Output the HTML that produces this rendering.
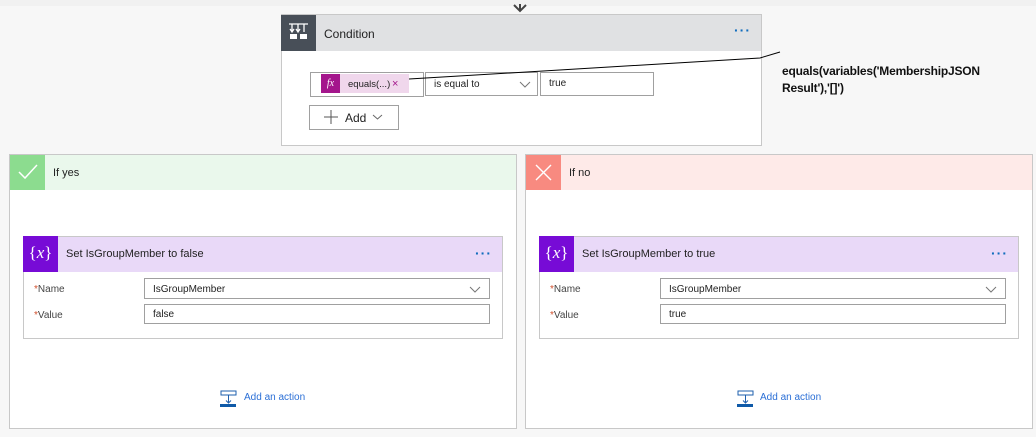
<!DOCTYPE html>
<html><head><style>
*{box-sizing:border-box;margin:0;padding:0}
body{width:1036px;height:437px;background:#f7f7f7;font-family:"Liberation Sans",sans-serif;position:relative;overflow:hidden;color:#222}
.a{position:absolute}
.t{font-size:11px;position:absolute;white-space:nowrap}
.dots{position:absolute;color:#0f6cbd;font-size:14px;letter-spacing:1px;font-weight:bold}
.inp{position:absolute;border:1px solid #a0a0a0;background:#fff;font-size:10px;padding:5px 0 0 8px}
.star{color:#d1512e}
</style></head><body>
<div class="a" style="left:0;top:0;width:1036px;height:6px;background:#f1f1f1"></div>
<svg class="a" style="left:512px;top:4px" width="16" height="10"><path d="M2 1 L8 7 L14 1 M8 0 V7" stroke="#444" stroke-width="2" fill="none"/></svg>

<!-- condition -->
<div class="a" style="left:281px;top:14px;width:481px;height:132px;background:#fff;border:1px solid #c8c8c8"></div>
<div class="a" style="left:282px;top:15px;width:479px;height:36px;background:#e0e1e3"></div>
<div class="a" style="left:281px;top:15px;width:35px;height:36px;background:#484f58"></div>
<svg class="a" style="left:288px;top:22px" width="22" height="20"><path d="M1 2H20M4 2V10M10 2V10M16 2V10M2 7l2 3 2-3M8 7l2 3 2-3" stroke="#fff" stroke-width="1.3" fill="none"/><rect x="2" y="12" width="7" height="5" fill="#fff"/><rect x="12" y="12" width="7" height="5" fill="#fff"/></svg>
<div class="t" style="left:324px;top:27px;font-size:12px">Condition</div>
<div class="dots" style="left:734px;top:22px">···</div>
<div class="a" style="left:310px;top:72px;width:114px;height:25px;border:1px solid #a0a0a0;background:#fff"></div>
<div class="a" style="left:321px;top:74px;width:19px;height:19px;background:#a4168c;color:#fff;font-family:'Liberation Serif',serif;font-style:italic;font-size:10px;text-align:center;line-height:19px">fx</div>
<div class="a" style="left:340px;top:74px;width:69px;height:19px;background:#f0d7ec"></div>
<div class="t" style="left:348px;top:79px;font-size:9.5px">equals(...)</div>
<div class="t" style="left:392px;top:78px;font-size:11px;color:#a4168c">×</div>
<div class="inp" style="left:425px;top:72px;width:113px;height:24px;padding-top:6px">is equal to</div>
<svg class="a" style="left:519px;top:81px" width="12" height="7"><path d="M1 1l5 5 5-5" stroke="#777" fill="none"/></svg>
<div class="inp" style="left:540px;top:72px;width:114px;height:24px">true</div>
<div class="a" style="left:309px;top:105px;width:90px;height:25px;border:1px solid #a0a0a0;background:#fff"></div>
<svg class="a" style="left:324px;top:110px" width="14" height="14"><path d="M7 0V14M0 7H14" stroke="#555" stroke-width="1"/></svg>
<div class="t" style="left:345px;top:111px;font-size:12px">Add</div>
<svg class="a" style="left:372px;top:114px" width="11" height="6"><path d="M1 1l4.5 4 4.5-4" stroke="#666" fill="none"/></svg>
<svg class="a" style="left:0;top:0" width="1036" height="437"><path d="M409 79 L760 58 L780 52" stroke="#000" stroke-width="1" fill="none"/></svg>
<div class="a" style="left:782px;top:63px;font-size:12px;font-weight:bold;line-height:17px;width:220px;letter-spacing:-0.2px;color:#111">equals(variables('MembershipJSON<br>Result'),'[]')</div>

<!-- yes -->
<div class="a" style="left:9px;top:154px;width:508px;height:275px;background:#fff;border:1px solid #c8c8c8"></div>
<div class="a" style="left:10px;top:155px;width:506px;height:35px;background:#eaf8ec"></div>
<div class="a" style="left:10px;top:155px;width:35px;height:35px;background:#8cdc8f"></div>
<svg class="a" style="left:18px;top:163px" width="20" height="18"><path d="M1 9l6 6L19 2" stroke="#fff" stroke-width="1.5" fill="none"/></svg>
<div class="t" style="left:53px;top:167px">If yes</div>

<div class="a" style="left:23px;top:236px;width:480px;height:103px;background:#fff;border:1px solid #c8c8c8"></div>
<div class="a" style="left:24px;top:237px;width:478px;height:35px;background:#e9d9f8"></div>
<div class="a" style="left:23px;top:236px;width:35px;height:36px;background:#770bd6;color:#fff;font-family:'Liberation Serif',serif;font-size:17px;text-align:center;line-height:34px">{<i>x</i>}</div>
<div class="t" style="left:66px;top:248px">Set IsGroupMember to false</div>
<div class="dots" style="left:475px;top:245px">···</div>
<div class="t" style="left:34px;top:284px;font-size:10px;color:#444"><span class="star">*</span>Name</div>
<div class="inp" style="left:144px;top:278px;width:346px;height:21px">IsGroupMember</div>
<svg class="a" style="left:469px;top:286px" width="12" height="7"><path d="M1 1l5 5 5-5" stroke="#777" fill="none"/></svg>
<div class="t" style="left:34px;top:310px;font-size:10px;color:#444"><span class="star">*</span>Value</div>
<div class="inp" style="left:144px;top:304px;width:346px;height:20px;padding-top:4px">false</div>
<svg class="a" style="left:220px;top:390px" width="18" height="18"><rect x="1" y="1" width="15" height="4" fill="none" stroke="#1e5fad"/><path d="M8.5 5V13M6 10.5l2.5 2.5 2.5-2.5" stroke="#1e5fad" fill="none"/><rect x="0" y="14" width="16" height="3" fill="#0f5aa8"/></svg>
<div class="t" style="left:244px;top:392px;font-size:10px;color:#2b6fd6">Add an action</div>

<!-- no -->
<div class="a" style="left:525px;top:154px;width:508px;height:275px;background:#fff;border:1px solid #c8c8c8"></div>
<div class="a" style="left:526px;top:155px;width:506px;height:35px;background:#feeae8"></div>
<div class="a" style="left:526px;top:155px;width:35px;height:35px;background:#f88a80"></div>
<svg class="a" style="left:535px;top:164px" width="17" height="17"><path d="M1 1L16 16M16 1L1 16" stroke="#fff" stroke-width="1.4"/></svg>
<div class="t" style="left:569px;top:167px">If no</div>

<div class="a" style="left:539px;top:236px;width:480px;height:103px;background:#fff;border:1px solid #c8c8c8"></div>
<div class="a" style="left:540px;top:237px;width:478px;height:35px;background:#e9d9f8"></div>
<div class="a" style="left:539px;top:236px;width:35px;height:36px;background:#770bd6;color:#fff;font-family:'Liberation Serif',serif;font-size:17px;text-align:center;line-height:34px">{<i>x</i>}</div>
<div class="t" style="left:582px;top:248px">Set IsGroupMember to true</div>
<div class="dots" style="left:991px;top:245px">···</div>
<div class="t" style="left:550px;top:284px;font-size:10px;color:#444"><span class="star">*</span>Name</div>
<div class="inp" style="left:660px;top:278px;width:346px;height:21px">IsGroupMember</div>
<svg class="a" style="left:985px;top:286px" width="12" height="7"><path d="M1 1l5 5 5-5" stroke="#777" fill="none"/></svg>
<div class="t" style="left:550px;top:310px;font-size:10px;color:#444"><span class="star">*</span>Value</div>
<div class="inp" style="left:660px;top:304px;width:346px;height:20px;padding-top:4px">true</div>
<svg class="a" style="left:737px;top:390px" width="18" height="18"><rect x="1" y="1" width="15" height="4" fill="none" stroke="#1e5fad"/><path d="M8.5 5V13M6 10.5l2.5 2.5 2.5-2.5" stroke="#1e5fad" fill="none"/><rect x="0" y="14" width="16" height="3" fill="#0f5aa8"/></svg>
<div class="t" style="left:760px;top:392px;font-size:10px;color:#2b6fd6">Add an action</div>
</body></html>
